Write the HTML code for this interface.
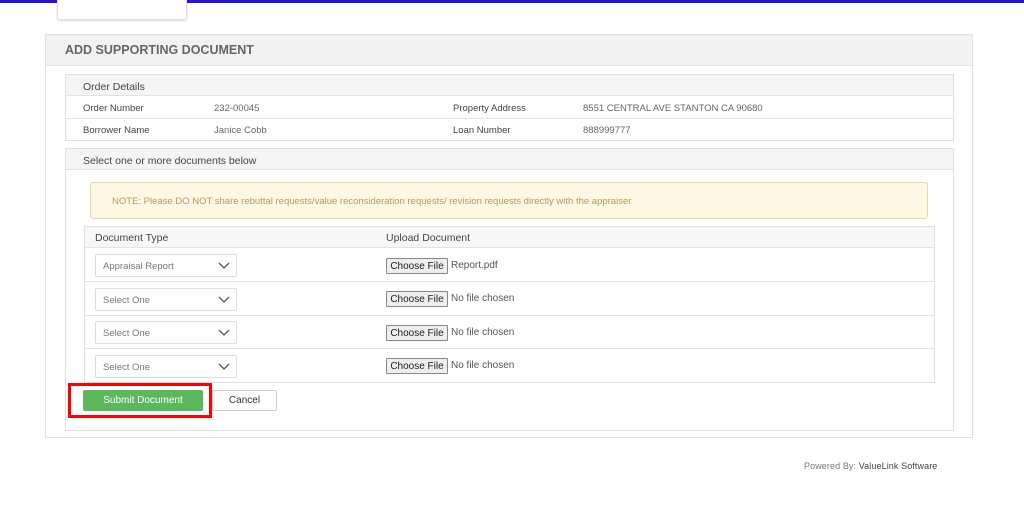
<!DOCTYPE html>
<html><head><style>
*{margin:0;padding:0;box-sizing:border-box}
body{width:1024px;height:508px;background:#fff;font-family:"Liberation Sans",sans-serif;position:relative;overflow:hidden;color:#555}
.a{position:absolute}
.t{font-size:9.5px;color:#444}
.v{font-size:9.5px;color:#666}
.sel{position:absolute;left:95px;width:142px;height:23px;border:1px solid #ddd;border-radius:2px;font-size:9.5px;color:#777;padding:6px 0 0 7px;background:#fff}
.sel svg{position:absolute;right:6px;top:7px}
.cf{position:absolute;left:386px;width:62px;height:16px;border:1px solid #888;background:#eee;font-size:10px;color:#222;text-align:center;line-height:15px;border-radius:1px}
.fn{position:absolute;left:451px;font-size:10px;color:#555}
.hl{position:absolute;height:1px;background:#e3e3e3}
</style></head><body>
<div class="a" style="left:0;top:0;width:1024px;height:3px;background:#2a14d6"></div>
<div class="a" style="left:57px;top:0;width:130px;height:20px;background:#fff;border:1px solid #ddd;border-top:none;border-radius:0 0 3px 3px;box-shadow:0 1px 2px rgba(0,0,0,.15)"></div>

<div class="a" style="left:45px;top:34px;width:928px;height:404px;border:1px solid #e0e0e0;background:#fff"></div>
<div class="a" style="left:46px;top:35px;width:926px;height:31px;background:#f2f2f2;border-bottom:1px solid #e3e3e3"></div>
<div class="a" style="left:65px;top:43px;font-size:12.5px;font-weight:bold;color:#666">ADD SUPPORTING DOCUMENT</div>

<div class="a" style="left:65px;top:74px;width:889px;height:67px;border:1px solid #e0e0e0"></div>
<div class="a" style="left:66px;top:75px;width:887px;height:21px;background:#f5f5f5;border-bottom:1px solid #e3e3e3"></div>
<div class="a" style="left:83px;top:81px;font-size:10.5px;color:#444">Order Details</div>
<div class="hl" style="left:66px;top:118px;width:887px"></div>
<div class="a t" style="left:83px;top:103px">Order Number</div>
<div class="a v" style="left:214px;top:103px">232-00045</div>
<div class="a t" style="left:453px;top:103px">Property Address</div>
<div class="a v" style="left:583px;top:103px">8551 CENTRAL AVE STANTON CA 90680</div>
<div class="a t" style="left:83px;top:125px">Borrower Name</div>
<div class="a v" style="left:214px;top:125px">Janice Cobb</div>
<div class="a t" style="left:453px;top:125px">Loan Number</div>
<div class="a v" style="left:583px;top:125px">888999777</div>

<div class="a" style="left:65px;top:148px;width:889px;height:283px;border:1px solid #e0e0e0"></div>
<div class="a" style="left:66px;top:149px;width:887px;height:21px;background:#f5f5f5;border-bottom:1px solid #e3e3e3"></div>
<div class="a" style="left:83px;top:155px;font-size:10.5px;color:#444">Select one or more documents below</div>

<div class="a" style="left:90px;top:182px;width:838px;height:37px;background:#fcf8e3;border:1px solid #e8d9a8;border-radius:3px"></div>
<div class="a" style="left:112px;top:196px;font-size:9.5px;color:#b89a5e">NOTE: Please DO NOT share rebuttal requests/value reconsideration requests/ revision requests directly with the appraiser</div>

<div class="a" style="left:84px;top:226px;width:851px;height:157px;border:1px solid #e0e0e0"></div>
<div class="a" style="left:85px;top:227px;width:849px;height:21px;background:#f7f7f7;border-bottom:1px solid #e3e3e3"></div>
<div class="a" style="left:95px;top:232px;font-size:10.5px;color:#444">Document Type</div>
<div class="a" style="left:386px;top:232px;font-size:10.5px;color:#444">Upload Document</div>
<div class="hl" style="left:85px;top:281px;width:849px"></div>
<div class="hl" style="left:85px;top:315px;width:849px"></div>
<div class="hl" style="left:85px;top:348px;width:849px"></div>

<div class="sel" style="top:254px">Appraisal Report<svg width="12" height="8"><path d="M1 1l5 5 5-5" stroke="#555" stroke-width="1.3" fill="none"/></svg></div>
<div class="sel" style="top:288px">Select One<svg width="12" height="8"><path d="M1 1l5 5 5-5" stroke="#555" stroke-width="1.3" fill="none"/></svg></div>
<div class="sel" style="top:321px">Select One<svg width="12" height="8"><path d="M1 1l5 5 5-5" stroke="#555" stroke-width="1.3" fill="none"/></svg></div>
<div class="sel" style="top:355px">Select One<svg width="12" height="8"><path d="M1 1l5 5 5-5" stroke="#555" stroke-width="1.3" fill="none"/></svg></div>

<div class="cf" style="top:258px">Choose File</div><div class="fn" style="top:260px">Report.pdf</div>
<div class="cf" style="top:291px">Choose File</div><div class="fn" style="top:293px">No file chosen</div>
<div class="cf" style="top:325px">Choose File</div><div class="fn" style="top:327px">No file chosen</div>
<div class="cf" style="top:358px">Choose File</div><div class="fn" style="top:360px">No file chosen</div>

<div class="a" style="left:68px;top:383px;width:144px;height:35px;border:3px solid #f00"></div>
<div class="a" style="left:83px;top:390px;width:120px;height:21px;background:#5cb85c;border-radius:2px;color:#fff;font-size:10px;text-align:center;line-height:21px">Submit Document</div>
<div class="a" style="left:212px;top:390px;width:65px;height:21px;border:1px solid #ccc;border-radius:2px;color:#333;font-size:10px;text-align:center;line-height:19px;background:#fff">Cancel</div>

<div class="a" style="left:804px;top:461px;font-size:9px;color:#777;letter-spacing:0.1px">Powered By: <span style="color:#444">ValueLink Software</span></div>
</body></html>
